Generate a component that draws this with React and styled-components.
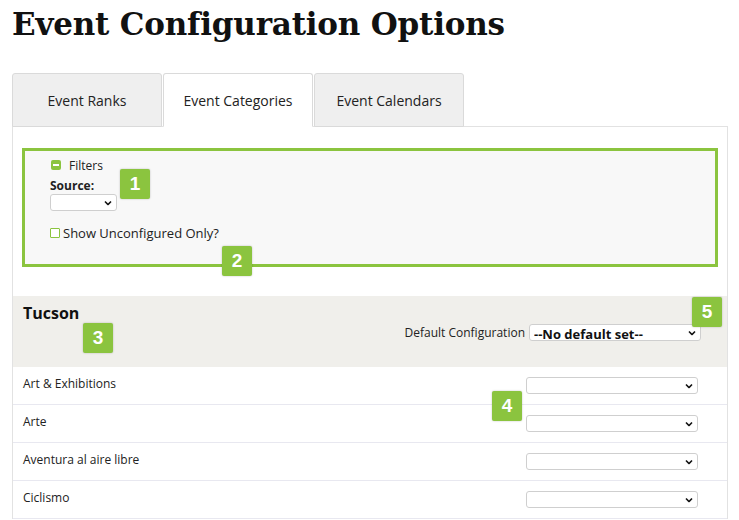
import React from 'react';
import styled, { createGlobalStyle } from 'styled-components';

const GlobalStyle = createGlobalStyle`
  body {
    margin: 0;
    background: white;
    font-family: "Open Sans", "Liberation Sans", sans-serif;
    color: #222;
  }
`;

const Page = styled.div`
  position: relative;
  padding: 0 11px 0 12px;
  width: 739px;
  height: 520px;
  box-sizing: border-box;
  overflow: hidden;
`;

const Title = styled.h1`
  font-family: "DejaVu Serif", serif;
  font-weight: bold;
  font-size: 31px;
  letter-spacing: -0.2px;
  color: #111;
  margin: 0;
  padding-top: 6px;
  height: 73px;
  box-sizing: border-box;
`;

const Tabs = styled.div`
  display: flex;
  gap: 1px;
  margin-bottom: -1px;
  position: relative;
  z-index: 1;
`;

const Tab = styled.div`
  width: 148px;
  height: 52px;
  display: flex;
  align-items: center;
  justify-content: center;
  font-size: 14px;
  color: #222;
  border: 1px solid #dadada;
  border-bottom-color: ${p => (p.active ? 'white' : '#dadada')};
  border-radius: 3px 3px 0 0;
  background: ${p => (p.active ? 'white' : '#efefef')};
`;

const Panel = styled.div`
  border: 1px solid #e2e2e2;
  border-bottom: none;
  padding-top: 21px;
`;

const FilterBox = styled.div`
  margin: 0 9px;
  border: 3px solid #8bc43f;
  background: #f8f8f8;
  height: 119px;
  padding: 7px 0 0 25px;
  box-sizing: border-box;
  font-size: 12px;
`;

const FilterToggle = styled.div`
  display: flex;
  align-items: center;
  gap: 8px;
  padding-left: 1px;
  height: 14px;
`;

const MinusIcon = styled.span`
  width: 10px;
  height: 10px;
  border-radius: 2px;
  background: #8bc43f;
  display: flex;
  align-items: center;
  justify-content: center;
  &::after {
    content: '';
    width: 6px;
    height: 2px;
    background: white;
  }
`;

const Label = styled.div`
  font-weight: bold;
  margin-top: 6px;
  line-height: 16px;
`;

const CheckRow = styled.label`
  display: flex;
  align-items: center;
  gap: 3px;
  margin-top: 13px;
  font-size: 13px;
`;

const CheckBox = styled.span`
  width: 8px;
  height: 8px;
  border: 1px solid #8bc43f;
  border-radius: 1px;
  background: white;
`;

const SelectWrap = styled.div`
  position: relative;
  width: ${p => p.width}px;
  height: ${p => p.height || 17}px;
`;

const NativeSelect = styled.select`
  appearance: none;
  width: 100%;
  height: 100%;
  margin: 0;
  padding: 0 0 0 4px;
  border: 1px solid #cfcfcf;
  border-radius: 3px;
  background: white;
  font-family: "Open Sans", "Liberation Sans", sans-serif;
  font-size: 13px;
  font-weight: bold;
  color: #111;
  box-sizing: border-box;
`;

const Chevron = styled.svg`
  position: absolute;
  right: 5px;
  top: 50%;
  transform: translateY(-50%);
  pointer-events: none;
`;

const Select = ({ width, height, value = '' }) => (
  <SelectWrap width={width} height={height}>
    <NativeSelect defaultValue={value}>
      <option value={value}>{value}</option>
    </NativeSelect>
    <Chevron width="8" height="5" viewBox="0 0 8 5">
      <path d="M1 1 L4 4 L7 1" fill="none" stroke="#111" strokeWidth="1.6" />
    </Chevron>
  </SelectWrap>
);

const GroupHeader = styled.div`
  margin-top: 29px;
  background: #f0efeb;
  height: 71px;
  padding: 7px 26px 0 10px;
  box-sizing: border-box;
  display: flex;
  flex-direction: column;
`;

const GroupName = styled.div`
  font-size: 16px;
  font-weight: bold;
  color: #111;
  line-height: 20px;
`;

const DefaultConfig = styled.div`
  display: flex;
  justify-content: flex-end;
  align-items: center;
  gap: 4px;
  margin-top: 1px;
  font-size: 12px;
  color: #222;
`;

const Row = styled.div`
  display: flex;
  align-items: center;
  justify-content: space-between;
  height: 38px;
  padding: 0 29px 0 10px;
  border-bottom: 1px solid #e8e8f0;
  box-sizing: border-box;
  font-size: 12px;
  color: #222;
`;

const RowLabel = styled.span`
  padding-bottom: 5px;
`;

const Badge = styled.div`
  position: absolute;
  left: ${p => p.x}px;
  top: ${p => p.y}px;
  width: 30px;
  height: 30px;
  background: #8bc43f;
  color: white;
  border-radius: 2px;
  box-shadow: 0 0 2px rgba(0, 0, 0, 0.25);
  display: flex;
  align-items: center;
  justify-content: center;
  font-family: "Liberation Sans", Arial, sans-serif;
  font-size: 19px;
  font-weight: bold;
  z-index: 5;
`;

const categories = ['Art & Exhibitions', 'Arte', 'Aventura al aire libre', 'Ciclismo'];

const badges = [
  { n: 1, x: 120, y: 169 },
  { n: 2, x: 222, y: 246 },
  { n: 3, x: 83, y: 323 },
  { n: 4, x: 492, y: 391 },
  { n: 5, x: 692, y: 297 },
];

export default function App() {
  return (
    <>
      <GlobalStyle />
      <Page>
        <Title>Event Configuration Options</Title>
        <Tabs>
          <Tab>Event Ranks</Tab>
          <Tab active>Event Categories</Tab>
          <Tab>Event Calendars</Tab>
        </Tabs>
        <Panel>
          <FilterBox>
            <FilterToggle>
              <MinusIcon />
              Filters
            </FilterToggle>
            <Label>Source:</Label>
            <Select width={67} height={17} />
            <CheckRow>
              <CheckBox />
              Show Unconfigured Only?
            </CheckRow>
          </FilterBox>
          <GroupHeader>
            <GroupName>Tucson</GroupName>
            <DefaultConfig>
              Default Configuration
              <Select width={172} height={17} value="--No default set--" />
            </DefaultConfig>
          </GroupHeader>
          {categories.map(c => (
            <Row key={c}>
              <RowLabel>{c}</RowLabel>
              <Select width={172} height={17} />
            </Row>
          ))}
        </Panel>
        {badges.map(b => (
          <Badge key={b.n} x={b.x} y={b.y}>{b.n}</Badge>
        ))}
      </Page>
    </>
  );
}
